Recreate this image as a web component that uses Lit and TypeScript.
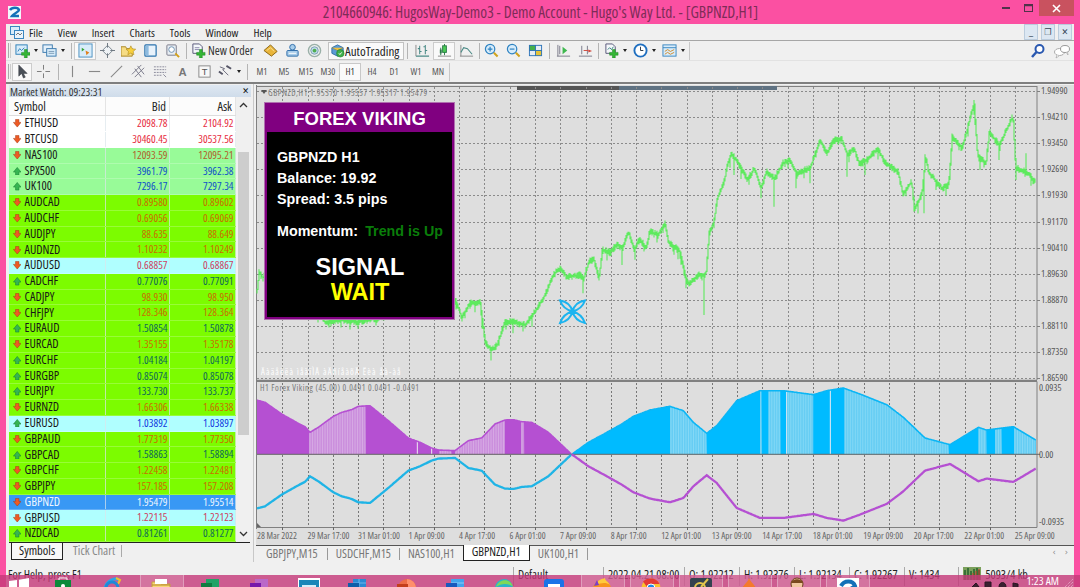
import {LitElement, html, css, svg} from 'lit';
import {customElement} from 'lit/decorators.js';

// ---- market watch data
type Row = [string, string, string, 'up' | 'dn', 'w' | 'p' | 'l' | 'c' | 's'];
const rows: Row[] = [
    ['ETHUSD', '2098.78', '2104.92', 'dn', 'w'],
    ['BTCUSD', '30460.45', '30537.56', 'dn', 'w'],
    ['NAS100', '12093.59', '12095.21', 'dn', 'p'],
    ['SPX500', '3961.79', '3962.38', 'up', 'p'],
    ['UK100', '7296.17', '7297.34', 'up', 'p'],
    ['AUDCAD', '0.89580', '0.89602', 'dn', 'l'],
    ['AUDCHF', '0.69056', '0.69069', 'dn', 'l'],
    ['AUDJPY', '88.635', '88.649', 'dn', 'l'],
    ['AUDNZD', '1.10232', '1.10249', 'dn', 'l'],
    ['AUDUSD', '0.68857', '0.68867', 'dn', 'c'],
    ['CADCHF', '0.77076', '0.77091', 'up', 'l'],
    ['CADJPY', '98.930', '98.950', 'dn', 'l'],
    ['CHFJPY', '128.346', '128.364', 'dn', 'l'],
    ['EURAUD', '1.50854', '1.50878', 'up', 'l'],
    ['EURCAD', '1.35155', '1.35178', 'dn', 'l'],
    ['EURCHF', '1.04184', '1.04197', 'up', 'l'],
    ['EURGBP', '0.85074', '0.85078', 'up', 'l'],
    ['EURJPY', '133.730', '133.737', 'up', 'l'],
    ['EURNZD', '1.66306', '1.66338', 'dn', 'l'],
    ['EURUSD', '1.03892', '1.03897', 'up', 'c'],
    ['GBPAUD', '1.77319', '1.77350', 'dn', 'l'],
    ['GBPCAD', '1.58863', '1.58894', 'up', 'l'],
    ['GBPCHF', '1.22458', '1.22481', 'dn', 'l'],
    ['GBPJPY', '157.185', '157.208', 'dn', 'l'],
    ['GBPNZD', '1.95479', '1.95514', 'dn', 's'],
    ['GBPUSD', '1.22115', '1.22123', 'dn', 'c'],
    ['NZDCAD', '0.81261', '0.81277', 'up', 'l'],
];

// ---- chart data, all in page pixels
const z9 = (a: number[][]) => a.map(([x, y]) => [550 + x / 2.96, 85 + y / 3]);
const pricePts = [
    [257, 290], [259, 272], [263, 278], [268, 270], [300, 285], [325, 322], [340, 320], [358, 322], [440, 305],
    [456, 302], [462, 318], [470, 303], [480, 302], [485, 342], [492, 350], [497, 345], [505, 322], [515, 322],
    [525, 325], [535, 312], [545, 295],
    ...z9([[10, 570], [30, 550], [50, 575], [90, 570], [100, 580], [115, 530], [130, 525], [145, 575], [155, 495],
        [175, 500], [200, 480], [215, 490], [232, 440], [250, 495], [265, 460], [285, 490], [295, 440], [320, 450],
        [340, 415], [350, 470], [385, 500], [400, 570], [410, 600], [440, 570], [458, 570], [462, 560], [470, 450],
        [485, 410], [495, 340], [515, 290], [525, 240], [537, 205], [560, 240], [585, 285], [605, 250], [625, 310],
        [640, 260], [665, 280], [690, 235], [710, 225], [730, 265], [770, 250], [780, 220], [800, 165], [820, 205],
        [840, 165], [865, 165], [880, 210], [900, 190], [915, 235], [940, 225], [970, 190], [990, 230], [1030, 260],
        [1045, 330], [1070, 290], [1078, 370], [1100, 330], [1112, 215], [1120, 260], [1160, 310], [1180, 300],
        [1190, 155], [1220, 190], [1255, 55], [1265, 210], [1290, 235], [1300, 140], [1330, 180], [1370, 95],
        [1378, 250], [1410, 260], [1435, 290]]),
];
const priceSpikes = z9([[458, 690], [665, 365], [880, 275], [1078, 380], [1108, 385], [1275, 255], [625, 340],
    [935, 270], [1330, 225], [1380, 285], [100, 625], [145, 580], [215, 540], [405, 610], [770, 295], [730, 310],
    [1112, 208], [1410, 205], [545, 270]]);

const z7 = (a: number[][]) => a.map(([x, y]) => [255 + x / 3, 375 + y / 3]);
const z8 = (a: number[][]) => a.map(([x, y]) => [650 + x / 3, 375 + y / 3]);
const oscPts = [
    ...z7([[5, 78], [30, 85], [80, 120], [130, 148], [150, 158], [165, 175], [190, 160], [235, 127], [260, 115],
        [290, 107], [310, 97], [345, 95], [400, 140], [460, 192], [495, 205], [530, 222], [550, 228], [600, 230],
        [640, 200], [680, 192], [720, 150], [750, 138], [775, 137], [800, 143], [830, 145], [880, 175], [950, 241],
        [1000, 205], [1050, 178], [1100, 150], [1135, 127]]),
    ...z8([[0, 108], [60, 97], [100, 110], [130, 145], [170, 178], [200, 155], [260, 80], [330, 50], [400, 50],
        [490, 62], [530, 50], [580, 42], [630, 60], [710, 92], [760, 130], [825, 192], [900, 212], [985, 160],
        [1010, 168], [1090, 158], [1157, 198]]),
];
const ZERO = 455.3;
const CROSS = 255 + 950 / 3;
const oscAt = (x: number) => {
    for (let i = 1; i < oscPts.length; i++) {
        if (x <= oscPts[i][0]) {
            const [a, b] = [oscPts[i - 1], oscPts[i]];
            return a[1] + (b[1] - a[1]) * (x - a[0]) / (b[0] - a[0]);
        }
    }
    return oscPts[oscPts.length - 1][1];
};
const lightPurple = [[162, 332], [553, 590], [600, 750], [798, 808]].map(([a, b]) => [255 + a / 3, 255 + b / 3]);
const lightCyan = [[60, 170], [330, 335], [355, 392], [412, 490], [583, 897], [985, 1010], [1035, 1055], [1092, 1157]]
    .map(([a, b]) => [650 + a / 3, 650 + b / 3]);
const whiteBars = [255 + 487 / 3, 255 + 530 / 3, 650 + 410 / 3, 650 + 541 / 3];

const gridX: number[] = [];
for (let i = 0; i < 30; i++) gridX.push(Math.round(282.3 + i * 25.27) + 0.5);
const priceLabels = ['1.94990', '1.94210', '1.93450', '1.92690', '1.91930', '1.91170', '1.90410', '1.89630', '1.88870', '1.88110', '1.87350', '1.86590'];
const timeLabels = ['28 Mar 2022', '29 Mar 17:00', '31 Mar 01:00', '1 Apr 09:00', '4 Apr 17:00', '6 Apr 01:00', '7 Apr 09:00', '8 Apr 17:00', '12 Apr 01:00', '13 Apr 09:00', '14 Apr 17:00', '18 Apr 01:00', '19 Apr 09:00', '20 Apr 17:00', '22 Apr 01:00', '25 Apr 09:00'];

// close line of the price chart, one short stroke per pixel, each one reaching back to the last value
function pricePath() {
    let seed = 12345;
    const rnd = () => (seed = (seed * 16807) % 2147483647) / 2147483647;
    let d = '';
    let seg = 1;
    let prev = pricePts[0][1];
    for (let x = 257; x < 1036; x += 1) {
        while (seg < pricePts.length - 1 && x > pricePts[seg][0]) seg++;
        const [a, b] = [pricePts[seg - 1], pricePts[seg]];
        const y = a[1] + (b[1] - a[1]) * Math.min(1, (x - a[0]) / (b[0] - a[0]));
        const top = Math.min(prev, y - 1 - rnd() * 3);
        const bottom = Math.max(prev, y + 1 + rnd() * 3 + (rnd() < 0.12 ? rnd() * 9 : 0));
        d += `M${x} ${top.toFixed(1)}V${bottom.toFixed(1)}`;
        for (const s of priceSpikes) {
            if (s[0] >= x && s[0] < x + 1) d += `M${x} ${y.toFixed(1)}V${s[1].toFixed(1)}`;
        }
        prev = y;
    }
    return d;
}

function oscLine(from: number, to: number, mirror: boolean) {
    let d = '';
    for (let x = from; x <= to; x += 1) {
        const y = oscAt(x);
        d += `${d ? 'L' : 'M'}${x.toFixed(1)} ${(mirror ? 2 * ZERO - y : y).toFixed(1)}`;
    }
    return d;
}

function oscArea(from: number, to: number) {
    return `${oscLine(from, to, false)}L${to.toFixed(1)} ${ZERO}L${from.toFixed(1)} ${ZERO}Z`;
}

function stripes(from: number, to: number) {
    let d = '';
    for (let x = from + 1; x < to; x += 2.5) d += `M${x.toFixed(1)} ${oscAt(x).toFixed(1)}V${ZERO}`;
    return d;
}

// ---- icons
const plus = (x: number, y: number) => svg`<path transform="translate(${x} ${y})" d="M3 0h3v3h3v3H6v3H3V6H0V3h3z" fill="#35b535" stroke="#17801f" stroke-width=".5"/>`;
const icons: Record<string, unknown> = {
    newChart: svg`<rect x="1" y="2" width="12" height="10" fill="#d8ecfa" stroke="#2b7fb8"/><path d="M3 9l2-3 2 2 3-3" stroke="#2b7fb8" fill="none"/>${plus(7, 7)}`,
    profiles: svg`<rect x="1" y="2" width="10" height="8" fill="#e4f0fa" stroke="#3a79ad"/><rect x="5" y="6" width="10" height="8" fill="#d8ecfa" stroke="#3a79ad"/><path d="M7 9h6M7 11h6" stroke="#7a9ab5"/>`,
    watch: svg`<rect x="1" y="1" width="14" height="14" fill="#d8ecfa" stroke="#4a8fc0"/><path d="M4 5l3 2-3 2z" fill="#35a535"/><path d="M8 8l4 2-3 3z" fill="#e0801c"/>`,
    data: svg`<path d="M8 2.500L13.500 8 8 13.500 2.500 8z" fill="#eef2f5" stroke="#7a848e"/><path d="M8 0v5M8 11v5M0 8h5M11 8h5" stroke="#6a747e"/>`,
    star: svg`<path d="M0 4h5l1 2h6v8H0z" fill="#f6dc84" stroke="#a98522"/><path d="M10.500 3l1.600 3.200 3.600.4-2.700 2.400.8 3.500-3.300-1.800-3.200 1.800.7-3.500-2.600-2.400 3.500-.4z" fill="#f7cf3c" stroke="#a98522" stroke-width=".6"/>`,
    terminal: svg`<rect x="2" y="2" width="12" height="12" rx="1" fill="#e8f2fb" stroke="#2b72ad" stroke-width="1.300"/><rect x="3" y="3" width="3" height="10" fill="#8dbbe0"/>`,
    tester: svg`<rect x="2" y="2" width="10" height="11" rx="1" fill="#e8eef4" stroke="#778"/><circle cx="7" cy="7" r="3" fill="#fff" stroke="#6a8fb0"/><path d="M11 11l4 4" stroke="#d4a017" stroke-width="2"/>`,
    order: svg`<path d="M2 1h7l3 3v7H2z" fill="#f4f7fa" stroke="#557"/><path d="M4 5h5M4 7h5" stroke="#88a"/>${plus(6, 7)}`,
    book: svg`<path d="M1 8l7-6 7 7-6 5z" fill="#e9b53a" stroke="#8a6414"/><path d="M4 8l4-3 4 4" stroke="#f7e09a" fill="none"/>`,
    signal: svg`<circle cx="8" cy="4.500" r="3" fill="#a8cdea" stroke="#2b6aa8"/><rect x="2" y="8" width="12" height="6" rx="1" fill="#a8cdea" stroke="#2b6aa8"/><path d="M4 11h8" stroke="#fff"/>`,
    radio: svg`<circle cx="8" cy="8" r="6.500" fill="none" stroke="#9ab0a8" stroke-width="1.500"/><circle cx="8" cy="8" r="4" fill="#bcd8e8" stroke="#7ba0b0"/><circle cx="8" cy="8" r="2" fill="#4fae4f"/>`,
    auto: svg`<path d="M2 5l6-3 6 3v6l-6 3-6-3z" fill="#5b9bd5" stroke="#2f6ea5"/><path d="M2 5l6 3 6-3" fill="#f0c040" stroke="#a88620" stroke-width=".5"/><circle cx="11" cy="11" r="4" fill="#3fb04a" stroke="#1d7d2b" stroke-width=".6"/><path d="M9.500 11l1 1.300 2-2.300" stroke="#fff" fill="none"/>`,
    bars: svg`<path d="M1 14h14M5 3v9M3 6h2M5 9h2M11 2v10M9 4h2M11 8h2" stroke="#4a8a86" stroke-width="1.100" fill="none"/><path d="M1 14V2" stroke="#888"/>`,
    candles: svg`<path d="M1 14h14" stroke="#888"/><path d="M8 1v12M4 5v8" stroke="#2a7a48"/><rect x="6" y="3" width="4" height="7" fill="#4ccc55" stroke="#2a7a48"/><rect x="3" y="7" width="2" height="4" fill="#2a7a48"/>`,
    line: svg`<path d="M1 14h14M2 14V2" stroke="#888"/><path d="M2 10l3-5 4 1 5 6" stroke="#4a8a86" stroke-width="1.100" fill="none"/>`,
    zin: svg`<circle cx="6.500" cy="6.500" r="5" fill="#d6ecfb" stroke="#2f83c2" stroke-width="1.300"/><path d="M4 6.500h5M6.500 4v5" stroke="#2f83c2" stroke-width="1.300"/><path d="M10.500 10.500l4 4" stroke="#cfa31e" stroke-width="2.200"/>`,
    zout: svg`<circle cx="6.500" cy="6.500" r="5" fill="#d6ecfb" stroke="#2f83c2" stroke-width="1.300"/><path d="M4 6.500h5" stroke="#2f83c2" stroke-width="1.300"/><path d="M10.500 10.500l4 4" stroke="#cfa31e" stroke-width="2.200"/>`,
    tile: svg`<rect x="1" y="2" width="14" height="12" fill="#2e74b8"/><rect x="2" y="3" width="5.500" height="4.500" fill="#45b04a"/><rect x="8.500" y="3" width="5.500" height="4.500" fill="#e7eef5"/><rect x="2" y="8.500" width="5.500" height="4.500" fill="#e7eef5"/><rect x="8.500" y="8.500" width="5.500" height="4.500" fill="#e4c33a"/>`,
    autoscroll: svg`<path d="M1 14h14M4 3v9M2 14V2" stroke="#778" fill="none"/><path d="M7 4l5 4-5 4z" fill="#3fb84f"/>`,
    shift: svg`<path d="M1 14h14M4 3v9M10 3v9" stroke="#778" fill="none"/><path d="M11 7l4 1.500-4 1.500z" fill="#d0473c"/><path d="M6 8h5" stroke="#d0473c"/>`,
    indicators: svg`<path d="M2 1h7l3 3v7H2z" fill="#f4f7fa" stroke="#557"/><path d="M4 7l2-2 2 2 2-3" stroke="#2f7f7a" fill="none"/>${plus(6, 7)}`,
    periods: svg`<circle cx="8" cy="8" r="6.500" fill="#fff" stroke="#1f6fc0" stroke-width="2"/><path d="M8 4v4h3" stroke="#234" fill="none"/>`,
    templates: svg`<rect x="1" y="2" width="14" height="12" fill="#d8ecfa" stroke="#3a86c0"/><path d="M1 5h14" stroke="#3a86c0"/><path d="M3 9l3-2 3 2 4-2M3 12l3-2 3 2 4-2" stroke="#d08a2a" fill="none"/>`,
    cursor: svg`<path d="M4 1v12l3-3 2 5 2-1-2-4h4z" fill="#4a5058" stroke="#2d3238" stroke-width=".5"/>`,
    cross: svg`<path d="M8 1v5M8 10v5M1 8h5M10 8h5" stroke="#777"/>`,
    vline: svg`<path d="M8 2v12" stroke="#888" stroke-width="1.200"/>`,
    hline: svg`<path d="M2 8h12" stroke="#888" stroke-width="1.200"/>`,
    trend: svg`<path d="M2 14L14 2" stroke="#888" stroke-width="1.200"/>`,
    channel: svg`<path d="M1 11L11 1M4 14L14 4M4 5l7 9M7 2l7 9" stroke="#778" fill="none"/>`,
    fib: svg`<path d="M1 3h13M1 6h13M1 9h13M1 12h9" stroke="#889" stroke-dasharray="2 1"/><path d="M11 11l3 3" stroke="#889"/>`,
    letter: svg`<text x="8" y="13" text-anchor="middle" font-family="Liberation Sans" font-weight="700" font-size="12" fill="#777">A</text>`,
    label: svg`<rect x="2" y="2" width="12" height="12" fill="#f8f8f8" stroke="#888"/><text x="8" y="12" text-anchor="middle" font-family="Liberation Sans" font-size="10" fill="#555">T</text>`,
    arrows: svg`<path d="M2 3l5 2-2 1 6 6" stroke="#667" fill="none"/><path d="M1 8l4 3M9 2l5 3" stroke="#556" stroke-width="2"/>`,
    search: svg`<circle cx="9.500" cy="6" r="4" fill="#fff" stroke="#2a58b0" stroke-width="2"/><path d="M6.500 9l-4.500 5" stroke="#2a58b0" stroke-width="2.500"/>`,
    chat: svg`<ellipse cx="5.500" cy="9" rx="5" ry="3.500" fill="#fff" stroke="#aaa"/><ellipse cx="11" cy="6" rx="4.500" ry="3.500" fill="#fff" stroke="#999"/><path d="M3 12l-1 3 3-2M12 9l2 3-.5-3" fill="#fff" stroke="#999" stroke-width=".6"/>`,
};

type Tool = {i?: string, w?: number, caret?: boolean, on?: boolean, sep?: boolean};
const toolsA: Tool[] = [
    {i: 'newChart', w: 27, caret: true}, {i: 'profiles', w: 29, caret: true}, {sep: true, w: 6},
    {i: 'watch', w: 22, on: true}, {i: 'data', w: 22}, {i: 'star', w: 21.5}, {i: 'terminal', w: 22}, {i: 'tester', w: 21.5}, {sep: true, w: 7},
];
const toolsB: Tool[] = [
    {i: 'book', w: 22}, {i: 'signal', w: 22}, {i: 'radio', w: 22},
];
const toolsC: Tool[] = [
    {sep: true, w: 7}, {i: 'bars', w: 22}, {i: 'candles', w: 22, on: true}, {i: 'line', w: 22}, {sep: true, w: 4},
    {i: 'zin', w: 21}, {i: 'zout', w: 22}, {i: 'tile', w: 23}, {sep: true, w: 5},
    {i: 'autoscroll', w: 22}, {i: 'shift', w: 22}, {sep: true, w: 5},
    {i: 'indicators', w: 29, caret: true}, {i: 'periods', w: 29, caret: true}, {i: 'templates', w: 30, caret: true},
];
const toolsD: Tool[] = [
    {i: 'cursor', w: 20, on: true}, {i: 'cross', w: 23}, {sep: true, w: 6}, {i: 'vline', w: 22}, {i: 'hline', w: 23}, {i: 'trend', w: 21},
    {i: 'channel', w: 22}, {i: 'fib', w: 23}, {i: 'letter', w: 21}, {i: 'label', w: 22}, {i: 'arrows', w: 28, caret: true}, {sep: true, w: 8},
];
const periods = ['M1', 'M5', 'M15', 'M30', 'H1', 'H4', 'D1', 'W1', 'MN'];

const taskIcons: Record<string, unknown> = {
    store: svg`<rect x="2" y="3" width="16" height="17" fill="#0b8a3a"/><path d="M6 3V1h8v2" stroke="#fff" fill="none"/><circle cx="10" cy="9" r="2" fill="#fff"/>`,
    ie: svg`<path d="M3 16C1 6 12 -1 17 3" stroke="#2aa6e8" stroke-width="3" fill="none"/><path d="M14 1l4 2-2 4" stroke="#f0c030" stroke-width="2" fill="none"/><circle cx="10" cy="11" r="6" fill="none" stroke="#1f8ad8" stroke-width="3"/>`,
    folder: svg`<path d="M1 5h7l2 2h9v12H1z" fill="#f6d778" stroke="#c8a040"/><rect x="4" y="2" width="12" height="5" fill="#fff"/><path d="M1 8h18" stroke="#b88a2a"/>`,
    excel: svg`<rect x="6" y="2" width="13" height="17" fill="#21a366"/><rect x="1" y="6" width="11" height="12" fill="#107c41"/>`,
    onenote: svg`<rect x="6" y="2" width="13" height="17" fill="#ba68c8"/><rect x="1" y="6" width="11" height="12" fill="#7719aa"/>`,
    amazon: svg`<rect x="0" y="2" width="22" height="18" fill="#1b86b8" stroke="#fff" stroke-width="2"/><path d="M4 9h14" stroke="#d6eef8" stroke-width="2"/>`,
    outlook: svg`<rect x="6" y="2" width="13" height="17" fill="#2a8ad4"/><path d="M6 6h13M12 2v17" stroke="#6cb5ea"/><rect x="1" y="6" width="11" height="12" fill="#0f5ea8"/>`,
    ppt: svg`<circle cx="11" cy="11" r="9" fill="#ed6c47"/><path d="M11 2a9 9 0 0 1 9 9h-9z" fill="#ff8f6b"/><rect x="1" y="7" width="11" height="12" fill="#c43e1c"/>`,
    word: svg`<rect x="6" y="2" width="13" height="17" fill="#41a5ee"/><path d="M6 6h13" stroke="#8fcaf5"/><rect x="1" y="6" width="11" height="12" fill="#185abd"/>`,
    edge: svg`<circle cx="10" cy="11" r="9" fill="#2bb5c8"/><path d="M2 10c3-9 15-9 17 0-4-4-12-4-17 0z" fill="#7fd858"/>`,
    docs: svg`<rect x="1" y="2" width="20" height="20" rx="3" fill="#1a73e8"/><rect x="5" y="7" width="12" height="10" fill="#fff"/>`,
    firefox: svg`<circle cx="10" cy="12" r="9" fill="#f7941d"/><path d="M4 8c1-5 6-6 9-7 0 3 3 3 5 7-4-3-9-2-14 0z" fill="#ffcb3d"/><path d="M2 9l3-6 2 5z" fill="#7b3fc6"/>`,
    chrome: svg`<circle cx="10" cy="11" r="9.500" fill="#fbc02d"/><path d="M10 1.500a9.500 9.500 0 0 1 8.500 5.500H10a4 4 0 0 0-4 3L2 4.500A9.500 9.500 0 0 1 10 1.500z" fill="#e53935"/><circle cx="10" cy="11" r="4" fill="#1e88e5" stroke="#fff"/>`,
    dark: svg`<rect x="0" y="1" width="22" height="21" rx="2" fill="#34424f"/><circle cx="10" cy="11" r="5" fill="none" stroke="#e3c64c" stroke-width="2"/><path d="M18 2l-7 8" stroke="#e3c64c" stroke-width="2"/>`,
    flame: svg`<path d="M10 1c1 4 8 8 8 14a8 8 0 0 1-16 0C2 9 9 6 10 1z" fill="#f47a2c"/>`,
    person: svg`<circle cx="9" cy="7" r="6" fill="#f1c8a0" stroke="#6b3f1d"/><path d="M3 6c1-5 11-5 12 0z" fill="#7a4a1e"/><rect x="2" y="13" width="14" height="8" fill="#eee"/>`,
    z: svg`<rect x="0" y="1" width="22" height="22" fill="#fff"/><path d="M4 9c3-6 12-6 14 0-3 3-6 3-8 5" stroke="#1470b8" stroke-width="4" fill="none"/>`,
};
const taskOrder: [string, boolean][] = [
    ['store', false], ['ie', false], ['folder', true], ['excel', false], ['onenote', false], ['amazon', false], ['outlook', false],
    ['ppt', false], ['word', false], ['edge', false], ['docs', false], ['firefox', true], ['chrome', true], ['dark', true],
    ['flame', true], ['person', true], ['z', true],
];

@customElement('app-root')
export class AppRoot extends LitElement {
    static styles = css`
        :host {
            display: block;
            position: relative;
            width: 1080px;
            height: 587px;
            overflow: hidden;
            background: #fb50a2;
            font-family: "Open Sans", "Liberation Sans", sans-serif;
            font-stretch: 75%;
            font-size: 11px;
            color: #222;
        }
        svg { display: block; }

        .title {
            height: 24px;
            display: flex;
            align-items: center;
            padding: 0 6px 0 8px;
        }
        .logo { width: 13px; height: 13px; flex: none; }
        .title-text {
            flex: 1;
            text-align: center;
            font-size: 15.500px;
            color: #7d2c57;
            white-space: nowrap;
            margin-left: 65px;
        }
        .wbtn { width: 22px; height: 16px; align-self: flex-start; display: flex; align-items: center; justify-content: center; }
        .wbtn.close { width: 35px; height: 16px; background: #c9525f; }

        .client {
            margin: 0 6px 0 6px;
            height: 563px;
            background: #f0f0f0;
            display: flex;
            flex-direction: column;
        }
        .menu {
            height: 17px;
            box-sizing: border-box;
            flex: none;
            display: flex;
            align-items: center;
            border-bottom: 1px solid #a6a6a6;
            padding-left: 4px;
            font-size: 11.500px;
        }
        .menu-icon { width: 14px; height: 13px; margin-right: 5px; }
        .menu span { margin-right: 15px; }
        .mdi { margin-left: auto; display: flex; gap: 3px; padding-right: 2px; }
        .mdi div { width: 12px; height: 14px; background: #dce7f2; border: 1px solid #bcd; display: flex; align-items: center; justify-content: center; font-size: 9px; line-height: 1; color: #345; font-family: "DejaVu Sans", sans-serif; }

        .tb { display: flex; align-items: center; flex: none; padding-left: 2px; box-sizing: border-box; }
        .tb1 { height: 20px; border-bottom: 1px solid #e2e2e2; }
        .tb2 { height: 23px; border-bottom: 2px solid #7f7f7f; }
        .grip { width: 3px; height: 15px; box-sizing: border-box; border-left: 1px solid #aaa; border-right: 1px solid #ccc; margin-right: 1px; flex: none; }
        .tool { height: 18px; display: flex; align-items: center; justify-content: center; flex: none; box-sizing: border-box; }
        .tool.has-caret { justify-content: flex-start; padding-left: 3px; }
        .tool svg { width: 15px; height: 15px; flex: none; }
        .tool.on { background: #f9f9f9; border: 1px solid #ccc; }
        .caret { width: 0; height: 0; border: 2.500px solid transparent; border-top: 3px solid #222; border-bottom: 0; margin-left: 4px; }
        .sep { height: 16px; flex: none; display: flex; justify-content: center; }
        .sep::after { content: ""; width: 1px; height: 16px; background: #b4b4b4; }
        .order { display: flex; align-items: center; width: 69px; flex: none; font-size: 12px; padding-left: 1px; box-sizing: border-box; color: #333; }
        .order svg { width: 15px; height: 15px; flex: none; margin-right: 2px; }
        .autotrade { display: flex; align-items: center; width: 76px; height: 18px; box-sizing: border-box; border: 1px solid #c2c2c2; background: #fafafa; margin-left: 3px; flex: none; font-size: 13px; padding-left: 1px; }
        .autotrade svg { width: 15px; height: 15px; flex: none; }
        .tend { width: 1px; height: 18px; background: #c8c8c8; }
        .right { margin-left: auto; display: flex; gap: 8px; padding-right: 4px; }
        .right svg { width: 16px; height: 16px; }
        .per { width: 22px; text-align: center; font-size: 9.500px; color: #555; flex: none; height: 18px; line-height: 18px; box-sizing: border-box; }
        .per.on { background: #fafafa; border: 1px solid #c8c8c8; line-height: 16px; color: #333; }

        .main { display: flex; height: 478px; flex: none; }
        .side { width: 247px; flex: none; display: flex; flex-direction: column; padding: 1px 0 0 3px; box-sizing: border-box; }
        .mw-title { height: 12px; display: flex; align-items: center; background: linear-gradient(#dfe8f2, #cfdcea); font-size: 11.200px; padding-left: 1px; color: #333; margin-right: 2px; }
        .mw-title b { margin-left: auto; font-weight: 700; font-size: 9px; color: #111; padding-right: 2px; font-family: "DejaVu Sans", sans-serif; }
        .mw { display: flex; flex: none; height: 445px; }
        .tbl { width: 227px; flex: none; }
        .hdr, .row { display: grid; grid-template-columns: 96.500px 64.500px 66px; }
        .hdr { height: 18.300px; background: #fcfcfc; border-bottom: 1px solid #ddd; font-size: 12.500px; align-items: center; }
        .hdr div { padding: 0 3px; height: 100%; display: flex; align-items: center; border-right: 1px solid #e4e4e4; box-sizing: border-box; }
        .hdr div:first-child { padding-left: 5px; }
        .hdr .n { justify-content: flex-end; }
        .row { height: 15.780px; box-sizing: border-box; border-bottom: 1px solid rgba(255,255,255,.22); line-height: 14.500px; font-size: 11px; }
        .row > div { border-right: 1px solid rgba(220,230,235,.7); white-space: nowrap; }
        .sym { display: flex; align-items: center; gap: 3.500px; padding-left: 3.500px; color: #181818; font-size: 12.300px; }
        .sym svg { width: 8.500px; height: 8.500px; flex: none; }
        .num { text-align: right; padding-right: 1.500px; }
        .row.w { background: #fff; } .row.p { background: #98fb98; } .row.l { background: #7cfc00; } .row.c { background: #b0ffff; } .row.s { background: #3898f4; }
        .w .dn { color: #e62b3e; } .p .dn { color: #b0602c; } .p .up { color: #0f50c8; }
        .l .dn { color: #c96e00; } .l .up { color: #0e6a58; }
        .c .dn { color: #cf4060; } .c .up { color: #1038e0; }
        .s .num, .s .sym { color: #eef6ff; }
        .scroll { width: 15px; flex: none; display: flex; flex-direction: column; align-items: center; }
        .scroll svg { width: 9px; height: 6px; flex: none; }
        .scroll-top { height: 55px; flex: none; padding-top: 5px; box-sizing: border-box; }
        .thumb { width: 11px; height: 283px; background: #cdcdcd; flex: none; }
        .scroll-gap { flex: 1; }
        .scroll-bot { height: 11px; flex: none; }
        .side-tabs { border-top: 1px solid #222; display: flex; height: 18px; margin-right: 3px; align-items: flex-start; padding-left: 2px; flex: none; }
        .side-tabs div { padding: 0 6px; height: 16px; line-height: 16px; color: #888; font-size: 12.500px; }
        .side-tabs .act { background: #f8f8f8; color: #222; border: 1px solid #222; border-top: 0; padding: 0 7px; margin-right: 2px; }
        .side-tabs .tc { border-right: 1px solid #aaa; padding-right: 6px; height: 12px; line-height: 12px; margin-top: 2px; margin-left: 2px; }

        .gap { width: 3px; flex: none; border-left: 1px solid #c8c8c8; box-sizing: border-box; }
        .pane { flex: 1; display: flex; flex-direction: column; min-width: 0; position: relative; padding-top: 1px; }
        .pane svg text { font-family: "Open Sans", "Liberation Sans", sans-serif; }
        .chart-bg { background: #dedede; flex: none; }
        .price { position: relative; z-index: 1; overflow: visible; }

        .panel {
            position: absolute;
            z-index: 2;
            left: 8px;
            top: 18px;
            width: 191px;
            height: 218px;
            box-sizing: border-box;
            background: #800080;
            border: 3px solid #800080;
            outline: 1px solid #b070b0;
            outline-offset: -1px;
            display: flex;
            flex-direction: column;
            font-family: "Liberation Sans", sans-serif;
            font-stretch: normal;
            font-weight: 700;
            color: #fff;
        }
        .panel-head { height: 27px; flex: none; text-align: center; font-size: 18.500px; line-height: 27px; }
        .panel-body { flex: 1; background: #000; padding: 14.500px 9px 0 10px; font-size: 14.300px; }
        .panel-body p { margin: 0; line-height: 21.300px; white-space: nowrap; }
        .panel-body .mom { margin-top: 11px; display: flex; justify-content: space-between; }
        .panel-body .mom i { font-style: normal; color: #0a7d0a; }
        .sig { text-align: center; font-size: 23.500px; line-height: 25px; margin-top: 12px; }
        .sig.wait { color: #ffff00; margin-top: 0; }

        .tabs { height: 16px; flex: none; border-top: 1px solid #555; display: flex; align-items: flex-start; font-size: 12.100px; color: #777; position: relative; }
        .tab { padding: 0 8px; height: 12px; line-height: 12px; margin-top: 2px; border-right: 1px solid #999; white-space: nowrap; }
        .tab:first-child { padding: 0 9px 0 10px; }
        .tab.quiet { border-right: 0; }
        .tab.act { background: #fff; color: #222; height: 15px; line-height: 14px; margin-top: -1px; border: 1px solid #222; border-top: 0; }
        .tab-nav { margin-left: auto; padding-right: 6px; color: #888; font-size: 9px; display: flex; gap: 9px; margin-top: 1px; font-family: "DejaVu Sans", sans-serif; }

        .status { height: 24px; flex: none; display: flex; font-size: 12px; padding-top: 5px; box-sizing: border-box; }
        .status > div { height: 19px; line-height: 16px; padding-left: 4px; box-sizing: border-box; border-left: 1px solid #aaa; flex: none; white-space: nowrap; }
        .status .help { width: 507px; border-left: 0; padding-left: 2px; }
        .status .w90 { width: 90px; } .status .w81 { width: 81px; } .status .w55 { width: 55px; } .status .w53 { width: 53.500px; }
        .status .conn { display: flex; gap: 5px; }
        .conn svg { width: 18px; height: 13px; flex: none; }

        .taskbar {
            position: absolute;
            left: 0; right: 0; bottom: 0;
            height: 12px;
            background: rgba(196, 58, 122, .82);
            display: flex;
            overflow: hidden;
            color: #fff;
        }
        .winlogo { width: 39px; flex: none; padding: 3px 0 0 9px; box-sizing: border-box; }
        .winlogo svg { width: 20px; height: 20px; }
        .task { width: 49px; flex: none; box-sizing: border-box; padding-top: 2px; display: flex; justify-content: center; }
        .task svg { width: 22px; height: 22px; flex: none; }
        .task.run > span { display: block; padding: 0 10px; margin-top: -2px; padding-top: 2px; background: rgba(255,255,255,.14); border-left: 1px solid rgba(255,255,255,.3); border-right: 1px solid rgba(255,255,255,.3); height: 14px; }
        .tray { margin-left: auto; display: flex; align-items: flex-start; padding-right: 21px; gap: 5px; }
        .tray svg { width: 52px; height: 12px; }
        .clock { font-size: 11.500px; line-height: 12px; white-space: nowrap; }
        .sizer { position: absolute; right: 6px; bottom: 0; width: 10px; height: 9px; }
    `;

    renderTool(t: Tool) {
        if (t.sep) return html`<div class="sep" style="width:${t.w}px"></div>`;
        return html`<div class="tool ${t.on ? 'on' : ''} ${t.caret ? 'has-caret' : ''}" style="width:${t.w}px">
            <svg viewBox="0 0 16 16">${icons[t.i!]}</svg>${t.caret ? html`<span class="caret"></span>` : ''}
        </div>`;
    }

    renderPrice() {
        const hY = priceLabels.map((_, i) => 91 + i * 26.1);
        return html`<svg class="chart-bg price" width="818" height="296" viewBox="256 85 818 296">
            <path d="M256.500 85V381" stroke="#808080"/>
            <path d="M257 86.500H1037M1037 86V380" stroke="#808080" fill="none"/>
            <path d="M517 88H619" stroke="#555" stroke-width="4"/>
            <path d="M619 88H777" stroke="#5f7282" stroke-width="4"/>
            ${hY.map(y => svg`<path d="M257 ${Math.round(y) + 0.5}H1037" stroke="#8a8a8a" stroke-dasharray="2 2"/><path d="M1037 ${Math.round(y) + 0.5}h3" stroke="#808080"/>`)}
            ${gridX.map(x => svg`<path d="M${x} 87V379" stroke="#8a8a8a" stroke-dasharray="2 2"/>`)}
            <path d=${pricePath()} fill="none" stroke="#5eea5e" stroke-width="1.100"/>
            <g fill="none" stroke="#1cb4ef" stroke-width="2">
                <path d="M572.500 311.500Q563 309 560 300.500Q570 302 572.500 311.500Q575 302 585 300.500Q582 309 572.500 311.500Q582 314 585 323Q575 321 572.500 311.500Q570 321 560 323Q563 314 572.500 311.500Z"/>
            </g>
            <path d="M261 90h6l-3 4z" fill="#555"/>
            <text x="268" y="95.500" font-size="8.500" letter-spacing=".6" fill="#777">GBPNZD,H1  1.95370 1.95557 1.95317 1.95479</text>
            <text x="261" y="375" font-size="8.500" letter-spacing="1.200" fill="#fff">Äàäåëëà ìåàïÌÅ àÄñíåàõÄ Ëèà åà-àå</text>
            ${priceLabels.map((p, i) => svg`<text x="1041" y=${hY[i] + 3} font-size="9.600" fill="#555">${p}</text>`)}
            <path d="M256 380.500H1037" stroke="#808080" stroke-width="1.500"/>
        </svg>`;
    }

    renderOsc() {
        return html`<svg class="chart-bg" width="818" height="164" viewBox="256 382 818 164">
            <path d="M256.500 382V530M257 382.500H1037V528.500H257" stroke="#808080" fill="none"/>
            ${gridX.map(x => svg`<path d="M${x} 384V528" stroke="#777" stroke-dasharray="2 2"/>`)}
            <path d=${oscArea(257, CROSS)} fill="#b550d2"/>
            <path d=${oscArea(CROSS, 1036)} fill="#00bbff"/>
            ${lightPurple.map(([a, b]) => svg`<path d=${oscArea(a, b)} fill="#cb8fdd"/><path d=${stripes(a, b)} stroke="#d8aee6" stroke-width=".8"/>`)}
            ${lightCyan.map(([a, b]) => svg`<path d=${oscArea(a, b)} fill="#66cdf4"/><path d=${stripes(a, b)} stroke="#8cdaf6" stroke-width=".8"/>`)}
            ${whiteBars.map(x => svg`<path d="M${x} ${oscAt(x)}V${ZERO}" stroke="#efeaf2" stroke-width="1"/>`)}
            <path d=${oscLine(257, CROSS, false)} fill="none" stroke="#b550d2" stroke-width="1.600"/>
            <path d=${oscLine(CROSS, 1036, false)} fill="none" stroke="#0bb6f5" stroke-width="1.600"/>
            <path d="M257 ${ZERO}H1040" stroke="#666"/>
            <path d=${oscLine(257, CROSS, true)} fill="none" stroke="#1fb4e6" stroke-width="2.300"/>
            <path d=${oscLine(CROSS, 1036, true)} fill="none" stroke="#b550d2" stroke-width="2.300"/>
            <text x="260" y="392" font-size="8.500" letter-spacing=".55" fill="#777">H1 Forex Viking (45.00) 0.0491 0.0491 -0.0491</text>
            <text x="1039" y="392" font-size="9.600" fill="#555">0.0935</text>
            <text x="1039" y="458.500" font-size="9.600" fill="#555">0.00</text>
            <text x="1039" y="526" font-size="9.600" fill="#555">-0.0935</text>
            <path d="M257 524l4 4h-4z" fill="#666"/>
            ${gridX.filter((_, i) => i % 2 == 0).map(x => svg`<path d="M${x} 528v3" stroke="#666"/>`)}
            ${timeLabels.map((t, i) => svg`<text x=${257 + i * 50.52} y="539.500" font-size="9.200" fill="#666">${t}</text>`)}
        </svg>`;
    }

    render() {
        return html`
        <div class="title">
            <svg class="logo" viewBox="0 0 13 13"><rect width="13" height="13" fill="#f2f8fc"/><path d="M2 4c2-3 8-3 9 0 0 2-5 3-7 6h7" fill="none" stroke="#1470b8" stroke-width="2.400"/></svg>
            <div class="title-text">2104660946: HugosWay-Demo3 - Demo Account - Hugo's Way Ltd. - [GBPNZD,H1]</div>
            <div class="wbtn"><svg width="8" height="4" viewBox="0 0 8 4"><rect y="1" width="8" height="2" fill="#52324a"/></svg></div>
            <div class="wbtn"><svg width="9" height="8" viewBox="0 0 9 8"><rect x=".5" y=".5" width="8" height="7" fill="none" stroke="#52324a"/><path d="M0 1.500h9" stroke="#52324a" stroke-width="1.500"/></svg></div>
            <div class="wbtn close"><svg width="9" height="9" viewBox="0 0 9 9"><path d="M1 1l7 7M8 1l-7 7" stroke="#fff" stroke-width="1.600"/></svg></div>
        </div>
        <div class="client">
            <div class="menu">
                <svg class="menu-icon" viewBox="0 0 14 13"><rect x=".5" y=".5" width="9" height="8" fill="#d8ecfa" stroke="#3a86c0"/><rect x="4.500" y="4.500" width="9" height="8" fill="#eaf4fc" stroke="#3a86c0"/><path d="M6 9l2-2 2 2 2-2" stroke="#777" fill="none"/></svg>
                <span>File</span><span>View</span><span>Insert</span><span>Charts</span><span>Tools</span><span>Window</span><span>Help</span>
                <div class="mdi"><div>_</div><div>❐</div><div>✕</div></div>
            </div>
            <div class="tb tb1">
                <div class="grip"></div>
                ${toolsA.map(t => this.renderTool(t))}
                <div class="order"><svg viewBox="0 0 16 16">${icons.order}</svg>New Order</div>
                ${toolsB.map(t => this.renderTool(t))}
                <div class="autotrade"><svg viewBox="0 0 16 16">${icons.auto}</svg>AutoTrading</div>
                ${toolsC.map(t => this.renderTool(t))}
                <div class="tend"></div>
                <div class="right"><svg viewBox="0 0 16 16">${icons.search}</svg><svg viewBox="0 0 16 16">${icons.chat}</svg></div>
            </div>
            <div class="tb tb2">
                <div class="grip"></div>
                ${toolsD.map(t => this.renderTool(t))}
                ${periods.map(p => html`<div class="per ${p == 'H1' ? 'on' : ''}">${p}</div>`)}
                <div class="tend"></div>
            </div>
            <div class="main">
                <div class="side">
                    <div class="mw-title">Market Watch: 09:23:31<b>✕</b></div>
                    <div class="mw">
                        <div class="tbl">
                            <div class="hdr"><div>Symbol</div><div class="n">Bid</div><div class="n">Ask</div></div>
                            ${rows.map(([s, b, a, d, k]) => html`<div class="row ${k}">
                                <div class="sym"><svg viewBox="0 0 10 10">
                                    ${d == 'dn'
                                        ? svg`<path d="M3 .5h4v3.500h2.500L5 9.500 .5 4H3z" fill="#ee5a24" stroke="#a83a12" stroke-width=".6"/>`
                                        : svg`<path d="M3 9.500h4V6h2.500L5 .5 .5 6H3z" fill="#36b552" stroke="#137a30" stroke-width=".6"/>`}
                                </svg>${s}</div>
                                <div class="num ${d}">${b}</div>
                                <div class="num ${d}">${a}</div>
                            </div>`)}
                        </div>
                        <div class="scroll">
                            <div class="scroll-top"><svg viewBox="0 0 9 6"><path d="M1 5l3.500-3.500L8 5" fill="none" stroke="#333" stroke-width="1.300"/></svg></div>
                            <div class="thumb"></div>
                            <div class="scroll-gap"></div>
                            <div class="scroll-bot"><svg viewBox="0 0 9 6"><path d="M1 1l3.500 3.500L8 1" fill="none" stroke="#333" stroke-width="1.300"/></svg></div>
                        </div>
                    </div>
                    <div class="side-tabs"><div class="act">Symbols</div><div class="tc">Tick Chart</div></div>
                </div>
                <div class="gap"></div>
                <div class="pane">
                    ${this.renderPrice()}
                    ${this.renderOsc()}
                    <div class="panel">
                        <div class="panel-head">FOREX VIKING</div>
                        <div class="panel-body">
                            <p>GBPNZD H1</p>
                            <p>Balance: 19.92</p>
                            <p>Spread: 3.5 pips</p>
                            <p class="mom">Momentum: <i>Trend is Up</i></p>
                            <div class="sig">SIGNAL</div>
                            <div class="sig wait">WAIT</div>
                        </div>
                    </div>
                    <div class="tabs">
                        <div class="tab">GBPJPY,M15</div><div class="tab">USDCHF,M15</div><div class="tab quiet">NAS100,H1</div>
                        <div class="tab act">GBPNZD,H1</div><div class="tab">UK100,H1</div>
                        <div class="tab-nav"><span>‹</span><span>›</span></div>
                    </div>
                </div>
            </div>
            <div class="status">
                <div class="help">For Help, press F1</div>
                <div class="w90">Default</div>
                <div class="w81">2022.04.21 08:00</div>
                <div class="w55">O: 1.92212</div>
                <div class="w55">H: 1.92376</div>
                <div class="w55">L: 1.92134</div>
                <div class="w55">C: 1.92267</div>
                <div class="w53">V: 1434</div>
                <div class="conn"><svg viewBox="0 0 18 13"><rect width="18" height="13" fill="#7ba05b"/><path d="M2 13V3M5 13V1M8 13V4M11 13V2M14 13V1M16 13V3" stroke="#1e5c2a" stroke-width="1.400"/><path d="M10 13V6M13 13V4M16 13V2" stroke="#d0362b" stroke-width="1"/></svg>5093/4 kb</div>
            </div>
        </div>
        <div class="taskbar">
            <div class="winlogo"><svg viewBox="0 0 20 20"><path d="M0 3l8-1v8H0zM10 1.700l10-1.700v10H10z" fill="#fff"/></svg></div>
            ${taskOrder.map(([n, run]) => html`<div class="task ${run ? 'run' : ''}"><span><svg viewBox="0 0 22 22">${taskIcons[n]}</svg></span></div>`)}
            <div class="tray">
                <svg viewBox="0 0 52 12"><path d="M3 12l4-4 3 4M16 12V7h6v5M30 12c0-6 7-6 7 0M44 12V8l5 1v3" fill="#3a2030" stroke="#2a1522"/></svg>
                <div class="clock">1:23 AM</div>
            </div>
            <svg class="sizer" viewBox="0 0 10 9"><path d="M1 9l8-8M4 9l5-5M7 9l2-2" stroke="#e8b8d0" stroke-dasharray="1 1"/></svg>
        </div>
        `;
    }
}
